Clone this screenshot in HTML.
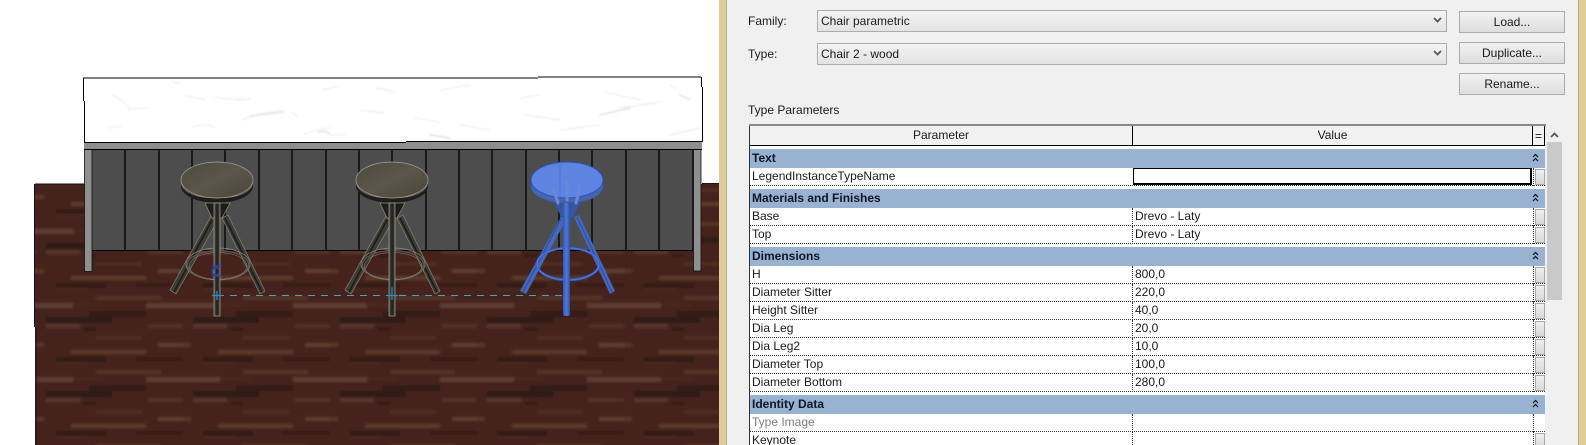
<!DOCTYPE html>
<html><head><meta charset="utf-8"><title>Chair parametric</title>
<style>
html,body{margin:0;padding:0;width:1586px;height:445px;overflow:hidden;background:#fff}
body{position:relative;font-family:"Liberation Sans",sans-serif;font-size:12px;color:#1a1a1a}
svg{position:absolute;left:0;top:0}
.t{position:absolute;white-space:nowrap;line-height:18px;height:18px}
.b{font-weight:bold;color:#0d1622}
.panel{position:absolute;left:719px;top:0;width:867px;height:445px;background:#f0f0f0}
.combo{position:absolute;left:817px;width:628px;height:20px;border:1px solid #acacac;background:linear-gradient(#f3f3f3,#e3e3e3)}
.btn{position:absolute;left:1459px;width:104px;height:20px;border:1px solid #acacac;background:linear-gradient(#f2f2f2,#dedede);text-align:center;line-height:20px}
.g{position:absolute;left:750px;width:795px;height:19px;background:#98b3d1}
.r{position:absolute;left:750px;width:795px;height:17px;background:#fff;border-bottom:1px dotted #333}
.c1{position:absolute;left:1132px;width:0;border-left:1px dotted #333;height:18px}
.c2{position:absolute;left:1533px;width:0;border-left:1px dotted #333;height:18px}
.k{position:absolute;left:1535px;width:8px;height:14px;background:linear-gradient(#f0f0f0,#d8d8d8);border:1px solid #a8a8a8}
</style></head><body>

<div class="panel"></div>
<div style="position:absolute;left:719px;top:0;width:8px;height:445px;background:#dfcd97;border-right:1px solid #b9ab80;box-sizing:border-box"></div>
<div style="position:absolute;left:1578px;top:0;width:8px;height:445px;background:#dfcd97;border-left:1px solid #b9ab80;box-sizing:border-box"></div>

<svg width="1586" height="445" viewBox="0 0 1586 445">
<defs>
<filter id="bl" x="-5%" y="-5%" width="110%" height="110%"><feGaussianBlur stdDeviation="1.300"/></filter>
<filter id="bm" x="-5%" y="-20%" width="110%" height="140%"><feGaussianBlur stdDeviation=".9"/></filter>
<clipPath id="fc"><rect x="35" y="184" width="684" height="261"/></clipPath>
<pattern id="wood" width="147" height="74" patternUnits="userSpaceOnUse" x="36" y="290">
<rect width="147" height="74" fill="#44241a"/>
<rect x="0" y="13" width="37" height="5" fill="#5f3e30"/>
<rect x="110" y="13" width="37" height="5" fill="#5f3e30"/>
<rect x="37" y="13" width="30" height="4" fill="#48281c"/>
<rect x="53" y="21" width="57" height="6" fill="#321c14"/>
<rect x="10" y="27" width="66" height="6" fill="#2f1a12"/>
<rect x="10" y="34" width="34" height="4" fill="#563729"/>
<rect x="112" y="34" width="35" height="4" fill="#533326"/>
<rect x="48" y="38" width="12" height="3" fill="#321b13"/>
<rect x="60" y="46" width="46" height="4" fill="#4f2e20"/>
<rect x="122" y="53" width="25" height="4" fill="#5e3c2d"/>
<rect x="0" y="53" width="8" height="4" fill="#593828"/>
<rect x="35" y="60" width="75" height="4" fill="#5b3a2c"/>
<rect x="20" y="67" width="50" height="5" fill="#331d14"/>
<rect x="20" y="72" width="32" height="2" fill="#4c2c1c"/>
<rect x="60" y="6" width="65" height="4" fill="#543527"/>
<rect x="100" y="67" width="47" height="4" fill="#3a1f15"/>
</pattern>
<linearGradient id="lg" x1="0" x2="1" y1="0" y2="0"><stop offset="0" stop-color="#57564c"/><stop offset=".5" stop-color="#1f1e19"/><stop offset="1" stop-color="#45443b"/></linearGradient>
<linearGradient id="seat" x1="0" x2="1" y1="0" y2="1"><stop offset="0" stop-color="#4d4940"/><stop offset=".5" stop-color="#5c5649"/><stop offset="1" stop-color="#48453a"/></linearGradient>
<linearGradient id="bleg" x1="0" x2="1" y1="0" y2="0"><stop offset="0" stop-color="#2f58bd"/><stop offset=".5" stop-color="#5078d4"/><stop offset="1" stop-color="#2b4fa8"/></linearGradient>
<g id="stool">
  <path d="M-36 180V186C-36 196 -18 203 0 203S36 196 36 186V180Z" fill="#1f1d19"/>
  <path d="M-6 216L-47 290L-41 294L1 220Z" fill="#3d3c35" stroke="#8f8e83" stroke-width=".6"/>
  <path d="M-5 220L-43 292" stroke="#1c1b16" stroke-width="1.600"/>
  <path d="M5 218L43 294L48 291L11 215Z" fill="#3d3c35" stroke="#8f8e83" stroke-width=".6"/>
  <path d="M8 218L45 292" stroke="#1c1b16" stroke-width="1.600"/>
  <path d="M-12 203L-5 218H5L13 203Z" fill="#1d1c18" stroke="#8e8c80" stroke-width=".7"/>
  <ellipse cx="1" cy="264" rx="32" ry="16" fill="none" stroke="#8f8d82" stroke-width=".7"/>
  <ellipse cx="1" cy="265" rx="30.500" ry="14.500" fill="none" stroke="#5a574e" stroke-width="1.200"/>
  <ellipse cx="1" cy="266" rx="29" ry="13.500" fill="none" stroke="#8f8d82" stroke-width=".5"/>
  <rect x="-3" y="203" width="6" height="113" fill="url(#lg)" stroke="#a8a69b" stroke-width=".7"/>
  <ellipse cx="0" cy="180" rx="36" ry="18" fill="url(#seat)" stroke="#a8a598" stroke-width=".7"/>
  <path d="M-36 182C-34 194 -18 198 0 198S34 194 36 182" fill="none" stroke="#989689" stroke-width=".6"/>
</g>
</defs>

<!-- floor -->
<g clip-path="url(#fc)"><rect x="25" y="174" width="704" height="281" fill="url(#wood)" filter="url(#bl)"/></g>
<path d="M34.500 184V327M36 327V445M35 184H84" stroke="#111" stroke-width="1" fill="none"/>
<path d="M702 183.500H719" stroke="#2a1510" stroke-width="1"/>

<!-- panels -->
<rect x="92" y="149" width="602" height="101" fill="#4d4d4d"/>
<path d="M125 149V250M159 149V250M192 149V250M225 149V250M259 149V250M292 149V250M326 149V250M359 149V250M392 149V250M426 149V250M459 149V250M492 149V250M526 149V250M559 149V250M592 149V250M626 149V250M659 149V250M693 149V250" stroke="#000" stroke-width="1.300"/>
<path d="M92 250.500H693" stroke="#000" stroke-width="1"/>

<!-- posts -->
<rect x="84.500" y="149" width="7.500" height="122.500" fill="#8f8f8f" stroke="#111" stroke-width=".8"/>
<rect x="693.500" y="149" width="7.500" height="122" fill="#8f8f8f" stroke="#111" stroke-width=".8"/>

<!-- marble top -->
<rect x="84" y="78" width="618" height="64" fill="#fff"/>
<g stroke="#f1f1f1" stroke-width="1.500" fill="none" stroke-linecap="round" filter="url(#bm)">
<path d="M112 95Q122 98 130 110M128 109L148 108M172 81L180 84M185 96Q196 97 205 100M215 96Q225 100 245 99M236 100L250 99M242 120Q262 112 283 111M292 112L297 116M305 134Q315 130 330 128M330 135L345 135M110 128L122 126M192 128Q205 122 215 128M322 90L340 86M360 110L384 113M376 88L395 92M440 90L470 85M520 98L540 95M525 115L560 120M560 130L600 125M605 92L640 100M620 108L660 102M670 85L675 88M670 135L700 128M460 125L490 130M415 118L440 122"/>
<path d="M318 132Q326 130 330 134M250 116L283 112M600 115L630 108M680 95L690 100M430 135L450 138" stroke="#e8e8e8" stroke-width="2"/>
</g>
<path d="M83 78H538M538 77H701M83.500 78V101M84.500 101V142M701.500 77V87M702.500 87V142" stroke="#000" stroke-width="1" fill="none"/>

<!-- band -->
<rect x="84" y="142" width="618" height="7" fill="#8e8e8e"/>
<path d="M84 142.500H406M406 141.500H702M84 149.500H702" stroke="#000" stroke-width="1"/>

<!-- stools -->
<use href="#stool" x="217"/>
<use href="#stool" x="392"/>

<!-- blue stool -->
<g transform="translate(567 0)">
  <path d="M-36 180V186C-36 197 -18 203 0 203S36 197 36 186V180Z" fill="#4b64a6" stroke="#2f55b8" stroke-width=".7"/>
  <path d="M-12 203L-5 218H5L13 203Z" fill="#3a5599" stroke="#2550c0" stroke-width=".8"/>
  <path d="M-6 217L-47 291L-41 294L-1 220Z" fill="#4468bc"/>
  <path d="M-6 219L-44 292" stroke="#2a4fb0" stroke-width="1.200"/>
  <path d="M7 217L43 294L48 291L12 215Z" fill="#4468bc"/>
  <path d="M10 217L45 292" stroke="#2a4fb0" stroke-width="1.200"/>
  <ellipse cx="1" cy="264" rx="31" ry="16" fill="none" stroke="#2f5ac8" stroke-width="2.600"/>
  <ellipse cx="1" cy="264" rx="31" ry="16" fill="none" stroke="#5f86dd" stroke-width=".8"/>
  <rect x="-4" y="203" width="7" height="113" rx="2" fill="url(#bleg)"/>
  <ellipse cx="0" cy="180" rx="36" ry="18" fill="#5d84e0" stroke="#2552c4" stroke-width="1"/>
  <path d="M-14 188L-9 203M0 180V200M13 186L9 203" stroke="#6a88d6" stroke-width="3" stroke-linecap="round"/>
  <path d="M-7 162V198" stroke="#4e74cc" stroke-width="1"/>
</g>

<!-- dimension -->
<path d="M217 295.500H566" stroke="#3fa7b5" stroke-width="1" stroke-dasharray="7 6"/>
<path d="M212 295.500H223M217 291V300M387 295.500H398M392 287V300" stroke="#2a8fd0" stroke-width="1.200"/>
<text x="211" y="276" font-family="Liberation Sans,sans-serif" font-size="13" font-weight="bold" fill="#2844b0">C</text>
<path d="M212 266H222M212 276H222" stroke="#2844b0" stroke-width="1.200"/>

<!-- scrollbar -->
<rect x="1547" y="125" width="15" height="320" fill="#f0f0f0"/>
<rect x="1547" y="142" width="15" height="158" fill="#c9c9c9"/>
<path d="M1551 137L1554.500 133.500L1558 137" stroke="#555" stroke-width="1.800" fill="none"/>
</svg>

<div class="t" style="left:748px;top:12px">Family:</div>
<div class="t" style="left:748px;top:45px">Type:</div>
<div class="combo" style="top:10px"><span class="t" style="left:3px;top:1px">Chair parametric</span></div>
<div class="combo" style="top:43px"><span class="t" style="left:3px;top:1px">Chair 2 - wood</span></div>
<div class="btn" style="top:11px">Load...</div>
<div class="btn" style="top:42px">Duplicate...</div>
<div class="btn" style="top:73px">Rename...</div>
<div class="t" style="left:748px;top:101px">Type Parameters</div>

<!-- table header -->
<div style="position:absolute;left:749px;top:124px;width:797px;height:2px;background:#8a8a8a"></div>
<div style="position:absolute;left:749px;top:126px;width:1px;height:319px;background:#333"></div>
<div style="position:absolute;left:750px;top:126px;width:795px;height:19px;background:#f2f2f2;border-bottom:1px solid #000"></div>
<div style="position:absolute;left:1132px;top:126px;width:1px;height:19px;background:#000"></div>
<div style="position:absolute;left:1532px;top:126px;width:1px;height:19px;background:#000"></div>
<div style="position:absolute;left:1544px;top:126px;width:1px;height:19px;background:#000"></div>
<div class="t" style="left:750px;width:382px;top:126px;text-align:center">Parameter</div>
<div class="t" style="left:1133px;width:399px;top:126px;text-align:center">Value</div>
<div class="t" style="left:1533px;width:11px;top:127px;text-align:center">=</div>

<!-- white body under rows -->
<div style="position:absolute;left:750px;top:146px;width:795px;height:299px;background:#fff"></div>

<!-- groups -->
<div class="g" style="top:149px"><span class="t b" style="left:2px;top:0">Text</span></div>
<div class="g" style="top:189px"><span class="t b" style="left:2px;top:0">Materials and Finishes</span></div>
<div class="g" style="top:247px"><span class="t b" style="left:2px;top:0">Dimensions</span></div>
<div class="g" style="top:395px"><span class="t b" style="left:2px;top:0">Identity Data</span></div>

<!-- rows -->
<div class="r" style="top:168px"><span class="t" style="left:2px;top:-1px">LegendInstanceTypeName</span></div>
<div class="r" style="top:208px"><span class="t" style="left:2px;top:-1px">Base</span><span class="t" style="left:385px;top:-1px">Drevo - Laty</span></div>
<div class="r" style="top:226px"><span class="t" style="left:2px;top:-1px">Top</span><span class="t" style="left:385px;top:-1px">Drevo - Laty</span></div>
<div class="r" style="top:266px"><span class="t" style="left:2px;top:-1px">H</span><span class="t" style="left:385px;top:-1px">800,0</span></div>
<div class="r" style="top:284px"><span class="t" style="left:2px;top:-1px">Diameter Sitter</span><span class="t" style="left:385px;top:-1px">220,0</span></div>
<div class="r" style="top:302px"><span class="t" style="left:2px;top:-1px">Height Sitter</span><span class="t" style="left:385px;top:-1px">40,0</span></div>
<div class="r" style="top:320px"><span class="t" style="left:2px;top:-1px">Dia Leg</span><span class="t" style="left:385px;top:-1px">20,0</span></div>
<div class="r" style="top:338px"><span class="t" style="left:2px;top:-1px">Dia Leg2</span><span class="t" style="left:385px;top:-1px">10,0</span></div>
<div class="r" style="top:356px"><span class="t" style="left:2px;top:-1px">Diameter Top</span><span class="t" style="left:385px;top:-1px">100,0</span></div>
<div class="r" style="top:374px"><span class="t" style="left:2px;top:-1px">Diameter Bottom</span><span class="t" style="left:385px;top:-1px">280,0</span></div>
<div class="r" style="top:414px"><span class="t" style="left:2px;top:-1px;color:#7d7d7d">Type Image</span></div>
<div class="r" style="top:432px;height:13px;border-bottom:none;overflow:hidden"><span class="t" style="left:2px;top:-1px">Keynote</span></div>

<!-- column separators -->
<div class="c1" style="top:208px"></div><div class="c1" style="top:226px"></div>
<div class="c1" style="top:266px"></div><div class="c1" style="top:284px"></div><div class="c1" style="top:302px"></div><div class="c1" style="top:320px"></div><div class="c1" style="top:338px"></div><div class="c1" style="top:356px"></div><div class="c1" style="top:374px"></div>
<div class="c1" style="top:414px"></div><div class="c1" style="top:432px;height:13px"></div>
<div class="c2" style="top:168px"></div><div class="c2" style="top:208px"></div><div class="c2" style="top:226px"></div>
<div class="c2" style="top:266px"></div><div class="c2" style="top:284px"></div><div class="c2" style="top:302px"></div><div class="c2" style="top:320px"></div><div class="c2" style="top:338px"></div><div class="c2" style="top:356px"></div><div class="c2" style="top:374px"></div>
<div class="c2" style="top:414px"></div><div class="c2" style="top:432px;height:13px"></div>

<!-- small cell buttons -->
<div class="k" style="top:169px"></div><div class="k" style="top:209px"></div><div class="k" style="top:227px"></div>
<div class="k" style="top:267px"></div><div class="k" style="top:285px"></div><div class="k" style="top:303px"></div><div class="k" style="top:321px"></div><div class="k" style="top:339px"></div><div class="k" style="top:357px"></div><div class="k" style="top:375px"></div>
<div class="k" style="top:433px"></div>

<!-- active cell -->
<div style="position:absolute;left:1133px;top:168px;width:396px;height:14px;border:2px solid #000;border-width:1px 2px 2px 1px;background:#fff"></div>

<svg width="1586" height="445" viewBox="0 0 1586 445" style="pointer-events:none">
<path d="M1534 18L1537.500 21.500L1541 18M1534 51L1537.500 54.500L1541 51" transform="translate(-100 0)" stroke="#555" stroke-width="1.800" fill="none"/>
<g stroke="#111" stroke-width="1.200" fill="none">
<path d="M1533 157L1535.500 154.500L1538 157M1533 161L1535.500 158.500L1538 161"/>
<path d="M1533 197L1535.500 194.500L1538 197M1533 201L1535.500 198.500L1538 201"/>
<path d="M1533 255L1535.500 252.500L1538 255M1533 259L1535.500 256.500L1538 259"/>
<path d="M1533 403L1535.500 400.500L1538 403M1533 407L1535.500 404.500L1538 407"/>
</g>
</svg>
</body></html>
